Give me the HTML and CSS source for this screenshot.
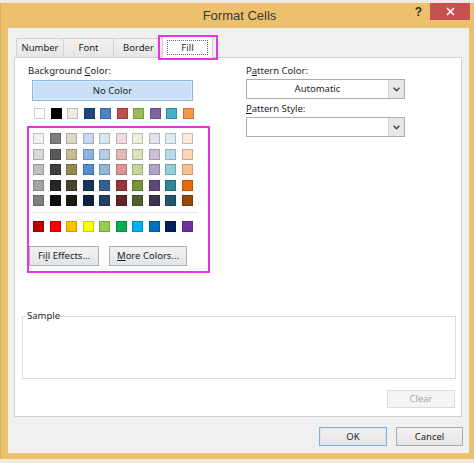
FILE: index.html
```html
<!DOCTYPE html>
<html>
<head>
<meta charset="utf-8">
<link rel="stylesheet" href="styles.css">
</head>
<body>
<div class="window">
  <div class="titlebar">
    <div></div>
    <div class="title">Format Cells</div>
    <div class="tb-controls">
      <span class="help">?</span>
      <span class="close"><svg width="9" height="9" viewBox="0 0 9 9"><path d="M1 1L8 8M8 1L1 8" stroke="#fff" stroke-width="1.6"/></svg></span>
    </div>
  </div>
  <div class="client">
    <div class="tabs">
      <div class="tab tab-number">Number</div>
      <div class="tab tab-font">Font</div>
      <div class="tab tab-border">Border</div>
      <div class="tab tab-fill"><span class="focus">Fill</span><span class="mark-tab"></span></div>
    </div>
    <div class="panel">
      <div class="top">
        <div class="left">
          <div class="label">Background <u>C</u>olor:</div>
          <div class="nocolor">No Color</div>
          <div class="row theme">
            <span class="sw" style="background:#ffffff"></span>
            <span class="sw" style="background:#000000"></span>
            <span class="sw" style="background:#eeece1"></span>
            <span class="sw" style="background:#1f497d"></span>
            <span class="sw" style="background:#4f81bd"></span>
            <span class="sw" style="background:#c0504d"></span>
            <span class="sw" style="background:#9bbb59"></span>
            <span class="sw" style="background:#8064a2"></span>
            <span class="sw" style="background:#4bacc6"></span>
            <span class="sw" style="background:#f79646"></span>
          </div>
          <div class="mbox">
            <div class="grid">
              <span class="sw" style="background:#f2f2f2"></span>
              <span class="sw" style="background:#7f7f7f"></span>
              <span class="sw" style="background:#ddd9c3"></span>
              <span class="sw" style="background:#c6d9f0"></span>
              <span class="sw" style="background:#dbe5f1"></span>
              <span class="sw" style="background:#f2dcdb"></span>
              <span class="sw" style="background:#ebf1dd"></span>
              <span class="sw" style="background:#e5e0ec"></span>
              <span class="sw" style="background:#dbeef3"></span>
              <span class="sw" style="background:#fdeada"></span>

              <span class="sw" style="background:#d8d8d8"></span>
              <span class="sw" style="background:#595959"></span>
              <span class="sw" style="background:#c4bd97"></span>
              <span class="sw" style="background:#8db3e2"></span>
              <span class="sw" style="background:#b8cce4"></span>
              <span class="sw" style="background:#e5b9b7"></span>
              <span class="sw" style="background:#d7e3bc"></span>
              <span class="sw" style="background:#ccc1d9"></span>
              <span class="sw" style="background:#b7dde8"></span>
              <span class="sw" style="background:#fbd5b5"></span>

              <span class="sw" style="background:#bfbfbf"></span>
              <span class="sw" style="background:#3f3f3f"></span>
              <span class="sw" style="background:#938953"></span>
              <span class="sw" style="background:#548dd4"></span>
              <span class="sw" style="background:#95b3d7"></span>
              <span class="sw" style="background:#d99694"></span>
              <span class="sw" style="background:#c3d69b"></span>
              <span class="sw" style="background:#b2a2c7"></span>
              <span class="sw" style="background:#92cddc"></span>
              <span class="sw" style="background:#fac08f"></span>

              <span class="sw" style="background:#a5a5a5"></span>
              <span class="sw" style="background:#262626"></span>
              <span class="sw" style="background:#494429"></span>
              <span class="sw" style="background:#17365d"></span>
              <span class="sw" style="background:#366092"></span>
              <span class="sw" style="background:#953734"></span>
              <span class="sw" style="background:#76923c"></span>
              <span class="sw" style="background:#5f497a"></span>
              <span class="sw" style="background:#31859b"></span>
              <span class="sw" style="background:#e36c09"></span>

              <span class="sw" style="background:#7f7f7f"></span>
              <span class="sw" style="background:#0c0c0c"></span>
              <span class="sw" style="background:#1d1b10"></span>
              <span class="sw" style="background:#0f243e"></span>
              <span class="sw" style="background:#244061"></span>
              <span class="sw" style="background:#632423"></span>
              <span class="sw" style="background:#4f6128"></span>
              <span class="sw" style="background:#3f3151"></span>
              <span class="sw" style="background:#205867"></span>
              <span class="sw" style="background:#974806"></span>
            </div>
            <div class="sep"></div>
            <div class="row std">
              <span class="sw" style="background:#c00000"></span>
              <span class="sw" style="background:#ff0000"></span>
              <span class="sw" style="background:#ffc000"></span>
              <span class="sw" style="background:#ffff00"></span>
              <span class="sw" style="background:#92d050"></span>
              <span class="sw" style="background:#00b050"></span>
              <span class="sw" style="background:#00b0f0"></span>
              <span class="sw" style="background:#0070c0"></span>
              <span class="sw" style="background:#002060"></span>
              <span class="sw" style="background:#7030a0"></span>
            </div>
            <div class="btnrow">
              <div class="btn btn-fx">Fi<u>l</u>l Effects...</div>
              <div class="btn btn-more"><u>M</u>ore Colors...</div>
            </div>
          </div>
        </div>
        <div class="right">
          <div class="label">P<u>a</u>ttern Color:</div>
          <div class="combo"><span class="combo-text">Automatic</span><span class="arrow"><svg width="7" height="5" viewBox="0 0 7 5"><path d="M0.6 0.8L3.5 3.8L6.4 0.8" fill="none" stroke="#404040" stroke-width="1.4"/></svg></span></div>
          <div class="label label2"><u>P</u>attern Style:</div>
          <div class="combo"><span class="combo-text"></span><span class="arrow"><svg width="7" height="5" viewBox="0 0 7 5"><path d="M0.6 0.8L3.5 3.8L6.4 0.8" fill="none" stroke="#404040" stroke-width="1.4"/></svg></span></div>
        </div>
      </div>
      <fieldset class="sample">
        <legend>Sample</legend>
        <div class="sample-body"></div>
      </fieldset>
      <div class="btn btn-clear">Clear</div>
    </div>
    <div class="footer">
      <div class="btn btn-ok">OK</div>
      <div class="btn btn-cancel">Cancel</div>
    </div>
  </div>
</div>
</body>
</html>
```

FILE: styles.css
```css
html, body {
  margin: 0;
  padding: 0;
}
body {
  width: 474px;
  height: 463px;
  overflow: hidden;
  background: #efebe2;
  font-family: "Noto Sans", "Open Sans", sans-serif;
  font-size: 9.5px;
  color: #1e1e1e;
}
u { text-decoration: underline; text-underline-offset: 1px; }

.window {
  margin-top: 3px;
  height: 456px;
  background: #ecc06d;
  border-left: 1px solid #d9af5c;
  box-sizing: border-box;
  display: flex;
  flex-direction: column;
}
.titlebar {
  height: 25px;
  display: grid;
  grid-template-columns: 1fr auto 1fr;
  align-items: start;
}
.title {
  font-family: "Liberation Sans", Arial, sans-serif;
  font-size: 13px;
  color: #3a3a3a;
  line-height: 26px;
  margin-left: 4px;
}
.tb-controls {
  justify-self: end;
  display: flex;
  align-items: flex-start;
  margin-right: 4px;
}
.help {
  font-family: "Liberation Sans", Arial, sans-serif;
  font-weight: bold;
  font-size: 12px;
  line-height: 19px;
  color: #2e2e2e;
  margin-right: 8px;
}
.close {
  width: 40px;
  height: 17px;
  background: #c75050;
  display: flex;
  align-items: center;
  justify-content: center;
}

.client {
  flex: 1;
  margin: 0 5px 6px 7px;
  background: #f0f0f0;
  padding: 8px 7px 0 6px;
  display: flex;
  flex-direction: column;
}

.tabs {
  display: flex;
  align-items: flex-end;
  height: 22px;
  margin-left: 2px;
  margin-bottom: -1px;
  position: relative;
  z-index: 1;
}
.tab {
  box-sizing: border-box;
  height: 19px;
  margin-bottom: 1px;
  border: 1px solid #d2d2d2;
  border-bottom: none;
  background: linear-gradient(#f2f2f2, #e6e6e6);
  text-align: center;
  line-height: 17px;
  color: #1e1e1e;
}
.tab-number { width: 48px; }
.tab-font { width: 51px; margin-left: -1px; }
.tab-border { width: 51px; margin-left: -1px; }
.tab-fill {
  width: 51px;
  height: 22px;
  margin-left: -2px;
  margin-bottom: 0;
  background: #fff;
  position: relative;
  display: flex;
  align-items: center;
  justify-content: center;
}
.focus {
  border: 1px dotted #6a6a6a;
  padding: 0 13px;
  line-height: 13px;
}
.mark-tab {
  position: absolute;
  left: -5px;
  top: -2px;
  width: 60px;
  height: 25px;
  box-sizing: border-box;
  border: 2px solid #e534e5;
}

.panel {
  box-sizing: border-box;
  height: 360px;
  background: #fff;
  border: 1px solid #d2d2d2;
  display: flex;
  flex-direction: column;
}
.top {
  display: flex;
  padding-top: 6px;
}
.left {
  width: 218px;
  padding-left: 13px;
}
.right {
  width: 159px;
}
.label {
  line-height: 14px;
  height: 14px;
}
.label2 { margin-top: 3px; }

.nocolor {
  box-sizing: border-box;
  margin: 2px 0 0 4px;
  width: 161px;
  height: 21px;
  background: #c9e0f7;
  border: 1px solid #8ab8e6;
  box-shadow: inset 0 0 0 1px #dcecfb;
  text-align: center;
  line-height: 19px;
}
.row {
  display: flex;
  gap: 5.5px;
}
.theme {
  margin: 7px 0 0 6px;
}
.sw {
  width: 11px;
  height: 11px;
  flex: none;
  box-shadow: inset 0 0 0 1px rgba(0, 0, 0, 0.2);
}

.mbox {
  box-sizing: border-box;
  margin: 7px 0 0 -1px;
  width: 183px;
  height: 147px;
  border: 2px solid #e534e5;
  padding-top: 5px;
}
.grid {
  margin-left: 4px;
  display: grid;
  grid-template-columns: repeat(10, 11px);
  column-gap: 5.5px;
  row-gap: 4.5px;
}
.sep {
  height: 1px;
  background: #e4e4e4;
  margin: 6px 0 0 4px;
  width: 165px;
}
.std {
  margin: 8px 0 0 4px;
}
.btnrow {
  display: flex;
  gap: 10px;
  margin-top: 14px;
}

.btn {
  box-sizing: border-box;
  border: 1px solid #acacac;
  background: linear-gradient(#f2f2f2, #e4e4e4);
  text-align: center;
  color: #1e1e1e;
}
.btn-fx { width: 70px; height: 20px; line-height: 18px; }
.btn-more { width: 78px; height: 20px; line-height: 18px; }

.combo {
  box-sizing: border-box;
  margin-top: 1px;
  height: 20px;
  border: 1px solid #acacac;
  background: #fff;
  display: flex;
}
.combo-text {
  flex: 1;
  text-align: center;
  line-height: 18px;
}
.arrow {
  width: 15px;
  background: #e8e8e8;
  border-left: 1px solid #d4d4d4;
  display: flex;
  align-items: center;
  justify-content: center;
}

.sample {
  margin: auto 0 0 7px;
  width: 434px;
  box-sizing: border-box;
  border: 1px solid #dcdcdc;
  padding: 0 0 0 4px;
  min-width: 0;
}
.sample legend {
  padding: 0;
  line-height: 12px;
}
.sample-body {
  height: 56px;
}
.btn-clear {
  align-self: flex-end;
  margin: 11px 6px 8px 0;
  width: 68px;
  height: 18px;
  line-height: 16px;
  background: #f4f4f4;
  border-color: #dadada;
  color: #a6a6a6;
}

.footer {
  display: flex;
  justify-content: flex-end;
  gap: 9px;
  margin: 10px -1px 0 0;
}
.btn-ok {
  width: 68px;
  height: 19px;
  line-height: 17px;
  border-color: #7eb0e0;
  box-shadow: inset 0 0 0 1px #d6e8f8;
}
.btn-cancel {
  width: 67px;
  height: 19px;
  line-height: 17px;
}
```
